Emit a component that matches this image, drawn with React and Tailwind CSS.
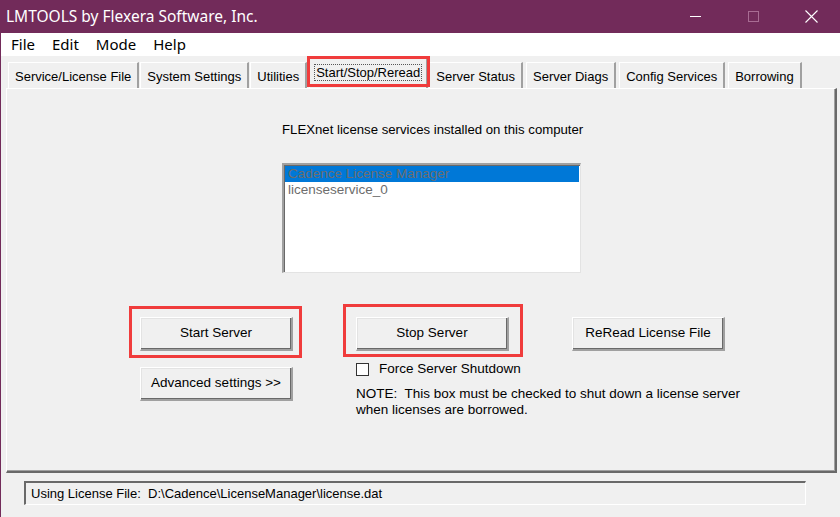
import React from "react";

const dlg = { fontFamily: '"Liberation Sans", Arial, sans-serif' };
const ui = { fontFamily: '"Noto Sans", "Open Sans", sans-serif' };

function Tab({ label, selected, boxed }) {
  if (selected) {
    return (
      <div className="relative -mx-[2px] z-10">
        <div className="h-[31px] px-[5px] pt-[5px] bg-[#f0f0f0] border-l border-t border-white border-r-2 border-r-[#a0a0a0] text-[13px] text-black">
          <span className="outline-1 outline-dotted outline-[#555] px-[1px]">{label}</span>
        </div>
        {boxed && (
          <div className="absolute -left-[2px] -right-[2px] -top-[1px] bottom-[1px] border-[3px] border-[#f03c3c] pointer-events-none" />
        )}
      </div>
    );
  }
  return (
    <div className="h-[26px] px-[6px] pt-[4px] bg-[#f0f0f0] border-l border-t border-white border-r-2 border-r-[#a0a0a0] text-[13px] text-black mr-[1px]">
      {label}
    </div>
  );
}

function Button({ children, className = "" }) {
  return (
    <div
      className={
        "h-[34px] w-[153px] flex items-center justify-center bg-[#f0f0f0] border-l border-t border-white border-r-2 border-b-2 border-r-[#a0a0a0] border-b-[#a0a0a0] shadow-[inset_-1px_-1px_0_#696969,inset_1px_1px_0_#e3e3e3] text-[13.5px] text-black " +
        className
      }
    >
      {children}
    </div>
  );
}

export default function App() {
  return (
    <div className="w-[840px] h-[517px] bg-[#f0f0f0] border-l border-[#722b5a] flex flex-col overflow-hidden" style={dlg}>
      {/* Title bar */}
      <div className="h-[33px] bg-[#722b5a] flex items-center text-white shrink-0">
        <div className="pl-[5px] text-[15.5px] flex-1" style={ui}>LMTOOLS by Flexera Software, Inc.</div>
        <div className="flex items-center h-full">
          <div className="w-[58px] h-full flex items-center justify-center">
            <div className="w-[11px] h-px bg-white" />
          </div>
          <div className="w-[58px] h-full flex items-center justify-center">
            <div className="w-[11px] h-[11px] border border-[#a86c93]" />
          </div>
          <div className="w-[58px] h-full flex items-center justify-center">
            <svg width="13" height="13" viewBox="0 0 13 13">
              <path d="M0.5 0.5 L12.5 12.5 M12.5 0.5 L0.5 12.5" stroke="white" strokeWidth="1.1" />
            </svg>
          </div>
        </div>
      </div>
      {/* Menu bar */}
      <div className="h-[23px] bg-white flex items-center text-[15px] text-black shrink-0" style={ui}>
        <span className="ml-[10px]">File</span>
        <span className="ml-[17px]">Edit</span>
        <span className="ml-[17px]">Mode</span>
        <span className="ml-[17px]">Help</span>
      </div>
      {/* Tabs */}
      <div className="flex items-end pl-[7px] h-[32px] shrink-0">
        <Tab label="Service/License File" />
        <Tab label="System Settings" />
        <Tab label="Utilities" />
        <div className="w-[3px]" />
        <Tab label="Start/Stop/Reread" selected boxed />
        <div className="w-[3px]" />
        <Tab label="Server Status" />
        <div className="w-[2px]" />
        <Tab label="Server Diags" />
        <div className="w-[2px]" />
        <Tab label="Config Services" />
        <div className="w-[2px]" />
        <Tab label="Borrowing" />
      </div>
      {/* Panel */}
      <div className="ml-[5px] mr-[3px] h-[385px] border-l border-t border-white border-r-2 border-b-2 border-r-[#696969] border-b-[#696969] shadow-[inset_-1px_-1px_0_#a0a0a0] flex flex-col text-[13.5px] text-black shrink-0">
        <div className="pl-[275px] pt-[33px]">
          <div className="h-[16px] leading-[16px] text-[13.2px]">FLEXnet license services installed on this computer</div>
          <div className="mt-[25px] w-[299px] h-[110px] bg-white border-l-2 border-t-2 border-l-[#a0a0a0] border-t-[#a0a0a0] border-r border-b border-r-[#e3e3e3] border-b-[#e3e3e3] shadow-[inset_1px_1px_0_#696969] pl-[1px] pt-[1px]">
            <div className="h-[16px] leading-[16px] bg-[#0078d7] text-[#6d6d6d] pl-[3px] mr-px">Cadence License Manager</div>
            <div className="h-[16px] leading-[16px] text-[#6d6d6d] pl-[3px]">licenseservice_0</div>
          </div>
        </div>
        <div className="flex pl-[133px] mt-[44px] gap-[63px]">
          <div className="flex flex-col w-[153px]">
            <div className="relative">
              <Button>Start Server</Button>
              <div className="absolute -left-[11px] -top-[11px] -right-[9px] -bottom-[7px] border-[3px] border-[#f03c3c]" />
            </div>
            <Button className="mt-[16px]">Advanced settings &gt;&gt;</Button>
          </div>
          <div className="flex flex-col w-[153px]">
            <div className="relative">
              <Button>Stop Server</Button>
              <div className="absolute -left-[13px] -top-[13px] -right-[14px] -bottom-[6px] border-[3px] border-[#f03c3c]" />
            </div>
            <div className="flex items-center mt-[11px] h-[14px]">
              <div className="w-[13px] h-[13px] bg-white border border-[#333] shrink-0" />
              <span className="ml-[10px] whitespace-nowrap">Force Server Shutdown</span>
            </div>
            <div className="mt-[10px] leading-[16px] whitespace-nowrap">
              <div>NOTE:&nbsp; This box must be checked to shut down a license server</div>
              <div>when licenses are borrowed.</div>
            </div>
          </div>
          <div className="flex flex-col w-[153px]">
            <Button>ReRead License File</Button>
          </div>
        </div>
      </div>
      {/* Status bar */}
      <div className="ml-[23px] mt-[8px] w-[782px] h-[24px] border-l-2 border-t-2 border-l-[#696969] border-t-[#696969] border-r border-b border-r-white border-b-white flex items-center pl-[5px] text-[13px] text-black shrink-0">
        Using License File:&nbsp;&nbsp;D:\Cadence\LicenseManager\license.dat
      </div>
    </div>
  );
}
